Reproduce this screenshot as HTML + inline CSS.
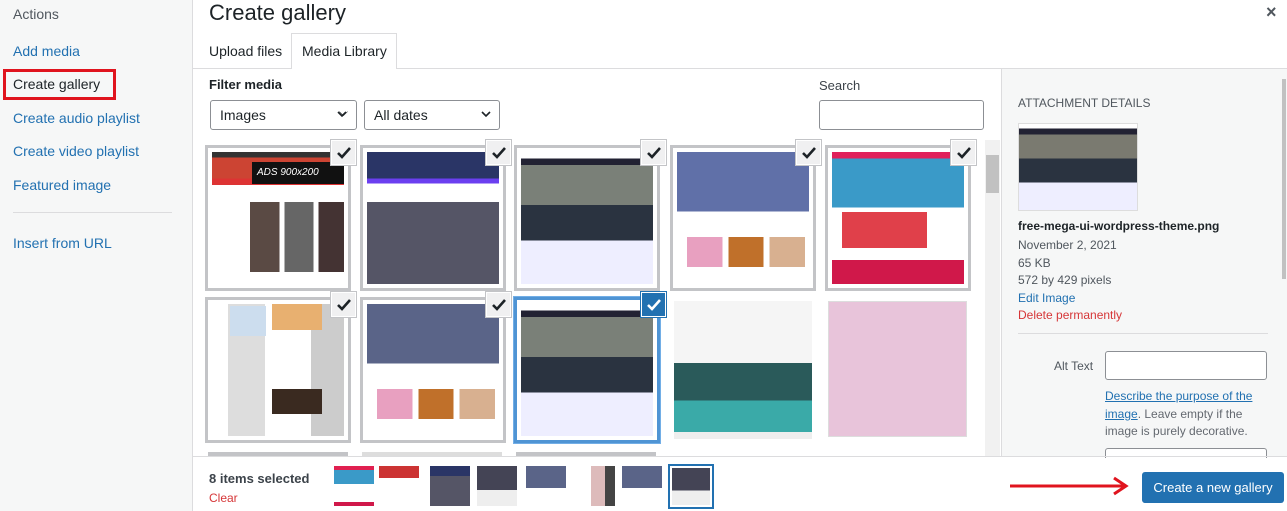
<!DOCTYPE html>
<html><head><meta charset="utf-8"><style>
*{box-sizing:border-box;margin:0;padding:0}
body{width:1287px;height:511px;overflow:hidden;font-family:"Liberation Sans",Arial,sans-serif;background:#fff;position:relative;color:#1d2327}
.abs{position:absolute}
#side{left:0;top:0;width:193px;height:511px;background:#f6f7f7;border-right:1px solid #dcdcde}
#side .l{position:absolute;left:13px;font-size:14px;color:#2271b1}
#right{left:1001px;top:69px;width:286px;height:387px;background:#f6f7f7;border-left:1px solid #dcdcde}
.tile{position:absolute;width:146px;height:146px;border:3px solid #c3c4c7;padding:4px;background:#fff}
.tile .in{width:100%;height:100%;overflow:hidden;position:relative}
.chk{position:absolute;width:25px;height:25px;background:#f0f0f1;border:1px solid #fff;box-shadow:0 0 0 1px #c3c4c7;display:flex;align-items:center;justify-content:center}
.chk svg{width:16px;height:16px}
.mini{position:absolute;top:466px;width:40px;height:40px;overflow:hidden}
</style></head><body>
<div id="side" class="abs">
 <div class="abs" style="left:13px;top:6px;font-size:14px;color:#50575e">Actions</div>
 <div class="l" style="top:43px">Add media</div>
 <div class="abs" style="left:3px;top:69px;width:113px;height:31px;border:3px solid #e0141e"></div>
 <div class="abs" style="left:13px;top:76px;font-size:14px;color:#1d2327">Create gallery</div>
 <div class="l" style="top:110px">Create audio playlist</div>
 <div class="l" style="top:143px">Create video playlist</div>
 <div class="l" style="top:177px">Featured image</div>
 <div class="abs" style="left:13px;top:212px;width:159px;height:1px;background:#dcdcde"></div>
 <div class="l" style="top:235px">Insert from URL</div>
</div>
<div class="abs" style="left:209px;top:0;font-size:22px;color:#1d2327">Create gallery</div>
<div class="abs" style="left:1266px;top:2px;font-size:18px;color:#50575e;font-weight:bold">×</div>
<div class="abs" style="left:193px;top:68px;width:1094px;height:1px;background:#dcdcde"></div>
<div class="abs" style="left:209px;top:43px;font-size:14px;color:#1d2327">Upload files</div>
<div class="abs" style="left:291px;top:33px;width:106px;height:36px;border:1px solid #dcdcde;border-bottom:none;background:#fff"></div>
<div class="abs" style="left:302px;top:43px;font-size:14px;color:#1d2327">Media Library</div>
<div class="abs" style="left:209px;top:77px;font-size:13px;font-weight:bold">Filter media</div>
<div class="abs" style="left:210px;top:100px;width:147px;height:30px;border:1px solid #8c8f94;border-radius:3px;font-size:14px;padding:6px 9px">Images<span style="position:absolute;right:8px;top:4px;font-size:12px">&#x2335;</span></div>
<div class="abs" style="left:364px;top:100px;width:136px;height:30px;border:1px solid #8c8f94;border-radius:3px;font-size:14px;padding:6px 9px">All dates</div>
<svg class="abs" style="left:337px;top:111px" width="10" height="8"><path d="M1 1l4 4 4-4" stroke="#1d2327" stroke-width="1.6" fill="none"/></svg>
<svg class="abs" style="left:481px;top:111px" width="10" height="8"><path d="M1 1l4 4 4-4" stroke="#1d2327" stroke-width="1.6" fill="none"/></svg>
<div class="abs" style="left:819px;top:78px;font-size:13px;color:#3c434a">Search</div>
<div class="abs" style="left:819px;top:100px;width:165px;height:30px;border:1px solid #8c8f94;border-radius:3px"></div>
<!-- scrollbar -->
<div class="abs" style="left:985px;top:140px;width:15px;height:316px;background:#f1f1f1"></div>
<div class="abs" style="left:986px;top:155px;width:13px;height:38px;background:#c1c1c1"></div>
<!-- row 1 -->
<div class="tile" style="left:205px;top:145px"><div class="in" style="background:linear-gradient(#333 0 4%,#c43 4% 20%,#d33 20% 25%,#fff 25%)"><div class="abs" style="left:40px;top:10px;width:96px;height:22px;background:#111;color:#fff;font-size:10px;font-style:italic;padding:5px">ADS 900x200</div><div class="abs" style="left:38px;top:50px;width:98px;height:70px;background:linear-gradient(90deg,#5a4a44 0 30%,#fff 30% 35%,#666 35% 65%,#fff 65% 70%,#433 70%)"></div></div></div>
<div class="tile" style="left:360px;top:145px"><div class="in" style="background:linear-gradient(#2a3566 0 20%,#6b3ff0 20% 24%,#fff 24% 38%,#556 38%)"></div></div>
<div class="tile" style="left:514px;top:145px"><div class="in" style="background:linear-gradient(#fff 0 5%,#223 5% 10%,#7a8078 10% 40%,#2a3340 40% 67%,#eef 67%)"></div></div>
<div class="tile" style="left:670px;top:145px"><div class="in" style="background:linear-gradient(#6070a8 0 45%,#fff 45%)"><div class="abs" style="left:10px;top:85px;width:118px;height:30px;background:linear-gradient(90deg,#e8a0c0 0 30%,#fff 30% 35%,#c0702a 35% 65%,#fff 65% 70%,#d8b090 70%)"></div></div></div>
<div class="tile" style="left:825px;top:145px"><div class="in" style="background:linear-gradient(#e0205a 0 5%,#3a9ac8 5% 42%,#fff 42% 82%,#d0184a 82%)"><div class="abs" style="left:10px;top:60px;width:85px;height:36px;background:#e0404a"></div></div></div>
<!-- row 2 -->
<div class="tile" style="left:205px;top:297px"><div class="in" style="background:linear-gradient(90deg,#fff 0 12%,#ddd 12% 40%,#fff 40% 75%,#ccc 75%)"><div class="abs" style="left:18px;top:2px;width:36px;height:30px;background:#cde"></div><div class="abs" style="left:60px;top:0;width:50px;height:26px;background:#e8b070"></div><div class="abs" style="left:60px;top:85px;width:50px;height:25px;background:#3a2a20"></div></div></div>
<div class="tile" style="left:360px;top:297px"><div class="in" style="background:linear-gradient(#5a6488 0 45%,#fff 45%)"><div class="abs" style="left:10px;top:85px;width:118px;height:30px;background:linear-gradient(90deg,#e8a0c0 0 30%,#fff 30% 35%,#c0702a 35% 65%,#fff 65% 70%,#d8b090 70%)"></div></div></div>
<div class="tile" style="left:514px;top:297px;border-color:#4f94d4;box-shadow:0 0 0 1px #72aee6"><div class="in" style="background:linear-gradient(#fff 0 5%,#223 5% 10%,#7a8078 10% 40%,#2a3340 40% 67%,#eef 67%)"></div></div>
<div class="abs" style="left:674px;top:301px;width:138px;height:138px;background:linear-gradient(#f5f5f5 0 45%,#2a5a5a 45% 72%,#3aaaa8 72% 95%,#eee 95%)"></div>
<div class="abs" style="left:828px;top:301px;width:139px;height:136px;background:#e8c4da;border:1px solid #ddd"></div>
<!-- checks -->
<div class="chk" style="left:331px;top:140px"><svg viewBox="0 0 16 16"><path d="M2 8l4 4 8-9" stroke="#1d2327" stroke-width="2.6" fill="none"/></svg></div>
<div class="chk" style="left:486px;top:140px"><svg viewBox="0 0 16 16"><path d="M2 8l4 4 8-9" stroke="#1d2327" stroke-width="2.6" fill="none"/></svg></div>
<div class="chk" style="left:641px;top:140px"><svg viewBox="0 0 16 16"><path d="M2 8l4 4 8-9" stroke="#1d2327" stroke-width="2.6" fill="none"/></svg></div>
<div class="chk" style="left:796px;top:140px"><svg viewBox="0 0 16 16"><path d="M2 8l4 4 8-9" stroke="#1d2327" stroke-width="2.6" fill="none"/></svg></div>
<div class="chk" style="left:951px;top:140px"><svg viewBox="0 0 16 16"><path d="M2 8l4 4 8-9" stroke="#1d2327" stroke-width="2.6" fill="none"/></svg></div>
<div class="chk" style="left:331px;top:292px"><svg viewBox="0 0 16 16"><path d="M2 8l4 4 8-9" stroke="#1d2327" stroke-width="2.6" fill="none"/></svg></div>
<div class="chk" style="left:486px;top:292px"><svg viewBox="0 0 16 16"><path d="M2 8l4 4 8-9" stroke="#1d2327" stroke-width="2.6" fill="none"/></svg></div>
<div class="chk" style="left:641px;top:292px;background:#2271b1;box-shadow:0 0 0 1px #2271b1"><svg viewBox="0 0 16 16"><path d="M2 8l4 4 8-9" stroke="#fff" stroke-width="2.6" fill="none"/></svg></div>
<!-- row 3 peeks -->
<div class="abs" style="left:208px;top:452px;width:140px;height:4px;background:#c3c4c7"></div>
<div class="abs" style="left:362px;top:452px;width:140px;height:4px;background:#ddd"></div>
<div class="abs" style="left:516px;top:452px;width:140px;height:4px;background:#c3c4c7"></div>
<!-- right sidebar -->
<div id="right" class="abs">
 <div class="abs" style="left:16px;top:27px;font-size:12px;color:#50575e">ATTACHMENT DETAILS</div>
 <div class="abs" style="left:16px;top:54px;width:120px;height:88px;border:1px solid #ddd;background:linear-gradient(#fff 0 5%,#223 5% 12%,#7a7a70 12% 40%,#2a3340 40% 68%,#eef 68%)"></div>
 <div class="abs" style="left:16px;top:150px;font-size:12px;font-weight:bold;color:#1d2327">free-mega-ui-wordpress-theme.png</div>
 <div class="abs" style="left:16px;top:168px;font-size:12px;color:#50575e;line-height:17.5px">November 2, 2021<br>65 KB<br>572 by 429 pixels<br><span style="color:#2271b1">Edit Image</span><br><span style="color:#d63638">Delete permanently</span></div>
 <div class="abs" style="left:16px;top:264px;width:250px;height:1px;background:#dcdcde"></div>
 <div class="abs" style="left:52px;top:290px;font-size:12px;color:#50575e">Alt Text</div>
 <div class="abs" style="left:103px;top:282px;width:162px;height:29px;border:1px solid #8c8f94;border-radius:3px;background:#fff"></div>
 <div class="abs" style="left:103px;top:319px;width:170px;font-size:12px;line-height:17.5px;color:#646970"><span style="color:#2271b1;text-decoration:underline">Describe the purpose of the image</span>. Leave empty if the image is purely decorative.</div>
 <div class="abs" style="left:103px;top:379px;width:162px;height:10px;border:1px solid #8c8f94;border-bottom:none;border-radius:3px 3px 0 0;background:#fff"></div>
 <div class="abs" style="left:280px;top:10px;width:4px;height:200px;background:#c1c1c1"></div>
</div>
<!-- bottom toolbar -->
<div class="abs" style="left:193px;top:456px;width:1094px;height:1px;background:#dcdcde"></div>
<div class="abs" style="left:209px;top:471px;font-size:13px;color:#3c434a;font-weight:bold">8 items selected</div>
<div class="abs" style="left:209px;top:491px;font-size:12px;color:#d63638">Clear</div>
<div class="mini" style="left:334px;background:linear-gradient(#e02050 0 10%,#3a9ac8 10% 45%,#fff 45% 90%,#d0184a 90%)"></div>
<div class="mini" style="left:379px;background:linear-gradient(#c33 0 30%,#fff 30%)"></div>
<div class="mini" style="left:430px;background:linear-gradient(#2a3566 0 25%,#556 25%)"></div>
<div class="mini" style="left:477px;background:linear-gradient(#445 0 60%,#eee 60%)"></div>
<div class="mini" style="left:526px;background:linear-gradient(#5a6488 0 55%,#fff 55%)"></div>
<div class="mini" style="left:575px;background:linear-gradient(90deg,#fff 0 40%,#dbb 40% 75%,#444 75%)"></div>
<div class="mini" style="left:622px;background:linear-gradient(#5a6488 0 55%,#fff 55%)"></div>
<div class="mini" style="left:668px;top:464px;width:46px;height:45px;border:2px solid #2271b1;background:linear-gradient(#445 0 60%,#eee 60%);background-clip:content-box;padding:2px"></div>
<svg class="abs" style="left:1008px;top:475px" width="122" height="22"><path d="M2 11H118M106 3l12 8-12 8" stroke="#e0141e" stroke-width="3" fill="none"/></svg>
<div class="abs" style="left:1142px;top:472px;width:142px;height:31px;background:#2271b1;border-radius:3px;color:#fff;font-size:13px;text-align:center;line-height:31px">Create a new gallery</div>
</body></html>
